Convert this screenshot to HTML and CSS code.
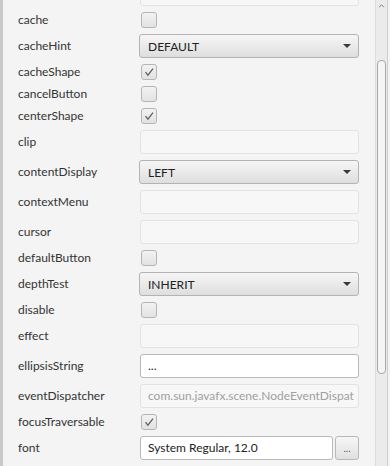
FILE: index.html
```html
<!DOCTYPE html>
<html lang="en">
<head>
    <meta charset="UTF-8">
    <meta name="viewport" content="width=device-width, initial-scale=1.0">
    <title>Properties</title>
    <link rel="stylesheet" href="styles.css">
</head>
<body>
    <div class="panel">
        <div class="edge"></div>

        <div class="sheet">
            <div class="grid">
                <span class="label"></span>
                <div class="field field-empty"></div>

                <span class="label">cache</span>
                <div class="check"></div>

                <span class="label">cacheHint</span>
                <div class="combo"><span>DEFAULT</span><i class="arrow"></i></div>

                <span class="label">cacheShape</span>
                <div class="check checked"><svg viewBox="0 0 14 14"><path d="M3.5 7.2l2.4 3L11 3.6"/></svg></div>

                <span class="label">cancelButton</span>
                <div class="check"></div>

                <span class="label">centerShape</span>
                <div class="check checked"><svg viewBox="0 0 14 14"><path d="M3.5 7.2l2.4 3L11 3.6"/></svg></div>

                <span class="label">clip</span>
                <div class="field field-empty"></div>

                <span class="label">contentDisplay</span>
                <div class="combo"><span>LEFT</span><i class="arrow"></i></div>

                <span class="label">contextMenu</span>
                <div class="field field-empty"></div>

                <span class="label">cursor</span>
                <div class="field field-empty"></div>

                <span class="label">defaultButton</span>
                <div class="check"></div>

                <span class="label">depthTest</span>
                <div class="combo"><span>INHERIT</span><i class="arrow"></i></div>

                <span class="label">disable</span>
                <div class="check"></div>

                <span class="label">effect</span>
                <div class="field field-empty"></div>

                <span class="label">ellipsisString</span>
                <div class="field">...</div>

                <span class="label">eventDispatcher</span>
                <div class="field field-disabled">com.sun.javafx.scene.NodeEventDispat</div>

                <span class="label">focusTraversable</span>
                <div class="check checked"><svg viewBox="0 0 14 14"><path d="M3.5 7.2l2.4 3L11 3.6"/></svg></div>

                <span class="label">font</span>
                <div class="font-row">
                    <div class="field">System Regular, 12.0</div>
                    <button class="more">...</button>
                </div>
            </div>
        </div>

        <div class="scrollbar">
            <div class="scroll-up"><svg viewBox="0 0 8 5"><path d="M1 4l3-3 3 3"/></svg></div>
            <div class="thumb"></div>
        </div>
    </div>
</body>
</html>
```

FILE: styles.css
```css
body {
    margin: 0;
    font-family: Lato, "Noto Sans", sans-serif;
    font-size: 12px;
    color: #333;
    background-color: #f4f4f4;
    overflow: hidden;
}
.panel {
    display: flex;
    height: 466px;
    overflow: hidden;
}
.edge {
    width: 3px;
    flex: none;
    background-color: #c9c9c9;
}
.sheet {
    flex: 1;
    padding: 0 16px 0 15px;
}
.grid {
    display: grid;
    grid-template-columns: 122px 1fr;
    row-gap: 6px;
    align-items: center;
    margin-top: -18px;
}
.label {
    line-height: 16px;
    white-space: nowrap;
}
.check {
    width: 14px;
    height: 14px;
    margin-left: 1px;
    border: 1px solid #b5b5b5;
    border-radius: 3px;
    background: linear-gradient(#f2f2f2, #e2e2e2);
}
.check svg {
    display: block;
    width: 14px;
    height: 14px;
}
.check svg path {
    fill: none;
    stroke: #606060;
    stroke-width: 1.3;
}
.combo {
    height: 22px;
    border: 1px solid #b3b3b3;
    border-radius: 3px;
    background: linear-gradient(#f6f6f6, #dedede);
    display: flex;
    align-items: center;
    justify-content: space-between;
    padding: 0 7px 0 8px;
    margin-left: -1px;
    color: #222;
}
.arrow {
    width: 0;
    height: 0;
    border-left: 4px solid transparent;
    border-right: 4px solid transparent;
    border-top: 4px solid #3a3a3a;
}
.field {
    height: 22px;
    line-height: 22px;
    border: 1px solid #b9b9b9;
    border-radius: 3px;
    background-color: #fff;
    padding: 0 7px;
    white-space: nowrap;
    overflow: hidden;
    color: #222;
}
.field-empty {
    background-color: #f7f7f7;
    border-color: #e3e3e3;
}
.field-disabled {
    background-color: #f7f7f7;
    border-color: #e3e3e3;
    color: #a0a0a0;
}
.font-row {
    display: flex;
    gap: 2px;
}
.font-row .field {
    flex: 1;
}
.more {
    width: 24px;
    height: 24px;
    padding: 0;
    border: 1px solid #b8b8b8;
    border-radius: 3px;
    background: linear-gradient(#f6f6f6, #e0e0e0);
    font-family: inherit;
    font-size: 10px;
    color: #555;
    line-height: 18px;
}
.scrollbar {
    width: 11px;
    flex: none;
    margin-right: 2px;
    border-left: 1px solid #dcdcdc;
    border-right: 1px solid #cfcfcf;
    background-color: #ebebeb;
}
.scroll-up {
    height: 12px;
    display: flex;
    justify-content: center;
    padding-top: 4px;
    box-sizing: border-box;
}
.scroll-up svg {
    width: 7px;
    height: 4px;
}
.scroll-up path {
    fill: none;
    stroke: #7a7a7a;
    stroke-width: 1.2;
}
.thumb {
    margin: 48px 1px 0;
    height: 312px;
    border: 1px solid #a9a9a9;
    border-radius: 4px;
    background-color: #f5f5f5;
}
```
